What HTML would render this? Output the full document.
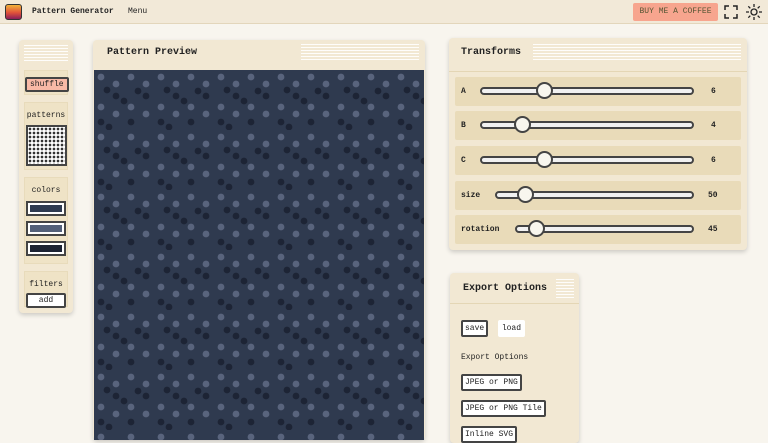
<!DOCTYPE html><html><head><style>
*{box-sizing:border-box;margin:0;padding:0}
body{width:768px;height:431px;overflow:hidden;background:#f8f5ee;font-family:"Liberation Mono","DejaVu Sans Mono",monospace;color:#222;position:relative}
.hdr{position:absolute;left:0;top:0;width:768px;height:24px;background:#f2e9d8;border-bottom:1px solid #e3d6bb}
.abs{position:absolute}
.panel{position:absolute;background:#f2e8d3;border-radius:4px;box-shadow:0 2px 5px rgba(0,0,0,.18)}
.lines{position:absolute;background:repeating-linear-gradient(#fff 0 1px,transparent 1px 3px);opacity:.9}
.sec{position:absolute;left:5px;width:44px;background:#efe3c6;border:1px solid #e8dbbb;text-align:center;font-size:8px}
.btn{display:inline-block;border:2px solid #444;background:#fff;font-size:8px;padding:1px 3px;border-radius:2px}
.row{position:absolute;left:6px;width:286px;height:29px;background:#e9dbb9;border-radius:2px;font-size:8px;font-weight:bold}
.row span{position:absolute;top:10px}
.track{position:absolute;top:10px;height:8px;border:2px solid #444;border-radius:4px;background:#f1f1f1}
.knob{position:absolute;top:5px;width:17px;height:17px;border:2px solid #444;border-radius:50%;background:#f8f6ee}
h2{position:absolute;font-size:10px;font-weight:bold}
</style></head><body>
<div class="hdr">
<div class="abs" style="left:5px;top:4px;width:17px;height:16px;border-radius:3px;background:linear-gradient(#f2b33a,#e0523a 55%,#8b1e5a);border:1px solid #333"></div>
<div class="abs" style="left:32px;top:7px;font-size:8px;font-weight:bold">Pattern Generator</div>
<div class="abs" style="left:128px;top:7px;font-size:8px">Menu</div>
<div class="abs" style="left:633px;top:3px;width:85px;height:18px;background:#f7a58e;border-radius:2px;font-size:8px;line-height:18px;text-align:center;color:#553">BUY ME A COFFEE</div>
<svg class="abs" style="left:724px;top:5px" width="14" height="14" fill="none" stroke="#222" stroke-width="1.5"><path d="M1 5V1h4M9 1h4v4M13 9v4H9M5 13H1V9"/></svg>
<svg class="abs" style="left:746px;top:4px" width="16" height="16" fill="none" stroke="#222" stroke-width="1.3"><circle cx="8" cy="8" r="3"/><path d="M8 0v3M8 13v3M0 8h3M13 8h3M2.3 2.3l2 2M11.7 11.7l2 2M2.3 13.7l2-2M11.7 4.3l2-2"/></svg>
</div>

<div class="panel" style="left:19px;top:40px;width:54px;height:273px">
<div class="lines" style="left:5px;top:5px;width:44px;height:16px"></div>
<div class="sec" style="top:30px;height:25px;padding-top:6px"><span class="btn" style="background:#f8b9a6">shuffle</span></div>
<div class="sec" style="top:62px;height:68px;padding-top:8px">patterns
<div style="margin:5px auto 0;width:41px;height:41px;border:2px solid #444;background:#fff;background-image:radial-gradient(#333 1.2px,transparent 1.5px);background-size:4px 4px"></div></div>
<div class="sec" style="top:137px;height:87px;padding-top:8px">colors
<div style="margin:6px auto 0;width:40px;height:15px;border:2px solid #444;background:#fff;padding:2px"><div style="background:#2e3a50;height:100%"></div></div>
<div style="margin:5px auto 0;width:40px;height:15px;border:2px solid #444;background:#fff;padding:2px"><div style="background:#536079;height:100%"></div></div>
<div style="margin:5px auto 0;width:40px;height:15px;border:2px solid #444;background:#fff;padding:2px"><div style="background:#1b2233;height:100%"></div></div></div>
<div class="sec" style="top:231px;height:36px;padding-top:8px">filters
<div class="btn" style="display:block;margin:4px auto 0;width:40px;padding:1px 0">add</div></div>
</div>

<div class="panel" style="left:93px;top:40px;width:332px;height:400px">
<h2 style="left:14px;top:7px">Pattern Preview</h2>
<div class="lines" style="left:208px;top:4px;width:118px;height:16px"></div>
<svg class="abs" style="left:1px;top:30px" width="330" height="370">
<defs><pattern id="p" width="60" height="60" patternUnits="userSpaceOnUse">
<rect width="60" height="60" fill="#2f3a4f"/>
<g fill="#59647d"><circle cx="7" cy="7" r="3.4"/><circle cx="37" cy="7" r="3.4"/><circle cx="22" cy="14" r="3.4"/><circle cx="52" cy="14" r="3.4"/><circle cx="7" cy="37" r="3.4"/><circle cx="37" cy="37" r="3.4"/><circle cx="22" cy="44" r="3.4"/><circle cx="52" cy="44" r="3.4"/></g>
<g fill="#1d2435"><circle cx="22" cy="26" r="3.4"/><circle cx="13" cy="20" r="3.4"/><circle cx="52" cy="26" r="3.4"/><circle cx="44" cy="21" r="3.4"/><circle cx="7" cy="52" r="3.4"/><circle cx="15" cy="57" r="3.4"/><circle cx="37" cy="52" r="3.4"/><circle cx="30" cy="31" r="3.4"/></g>
</pattern></defs><rect width="330" height="370" fill="url(#p)"/></svg>
</div>

<div class="panel" style="left:449px;top:38px;width:298px;height:212px">
<h2 style="left:12px;top:9px">Transforms</h2>
<div class="lines" style="left:84px;top:6px;width:208px;height:16px"></div>
<div class="abs" style="left:0;top:33px;width:298px;height:1px;background:#e4d6b5"></div>
<div class="row" style="top:39px"><span style="left:6px">A</span><div class="track" style="left:25px;width:214px"></div><div class="knob" style="left:81px"></div><span style="left:256px">6</span></div>
<div class="row" style="top:73px"><span style="left:6px">B</span><div class="track" style="left:25px;width:214px"></div><div class="knob" style="left:59px"></div><span style="left:256px">4</span></div>
<div class="row" style="top:108px"><span style="left:6px">C</span><div class="track" style="left:25px;width:214px"></div><div class="knob" style="left:81px"></div><span style="left:256px">6</span></div>
<div class="row" style="top:143px"><span style="left:6px">size</span><div class="track" style="left:40px;width:199px"></div><div class="knob" style="left:62px"></div><span style="left:253px">50</span></div>
<div class="row" style="top:177px"><span style="left:6px">rotation</span><div class="track" style="left:60px;width:179px"></div><div class="knob" style="left:73px"></div><span style="left:253px">45</span></div>
</div>

<div class="panel" style="left:450px;top:273px;width:129px;height:170px">
<h2 style="left:13px;top:10px">Export Options</h2>
<div class="lines" style="left:106px;top:6px;width:18px;height:20px"></div>
<div class="abs" style="left:0;top:30px;width:129px;height:1px;background:#e4d6b5"></div>
<div class="abs" style="left:11px;top:44px"><span class="btn" style="padding:2px 2px">save</span> <span class="btn" style="border-color:#fff;padding:2px 2px">load</span></div>
<div class="abs" style="left:11px;top:80px;font-size:8px">Export Options</div>
<div class="abs" style="left:11px;top:98px"><span class="btn" style="padding:2px 2px">JPEG or PNG</span></div>
<div class="abs" style="left:11px;top:124px"><span class="btn" style="padding:2px 2px">JPEG or PNG Tile</span></div>
<div class="abs" style="left:11px;top:150px"><span class="btn" style="padding:2px 2px">Inline SVG</span></div>
</div>
</body></html>
